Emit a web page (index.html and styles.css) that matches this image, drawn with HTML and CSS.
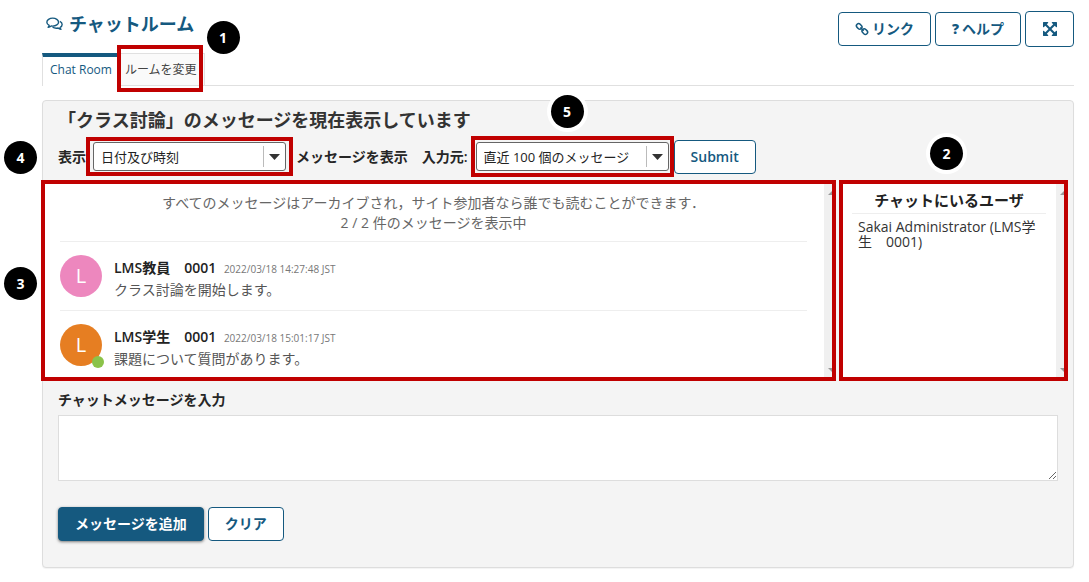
FILE: index.html
```html
<!DOCTYPE html>
<html lang="ja">
<head>
    <meta charset="UTF-8">
    <meta name="viewport" content="width=device-width, initial-scale=1.0">
    <title>チャットルーム</title>
    <link rel="stylesheet" href="styles.css">
</head>
<body>
    <header class="tool-header">
        <h1>
            <svg class="icon-chat" viewBox="0 0 16 14" aria-hidden="true">
                <path d="M6.300 1C3.300 1 .8 2.700 .8 4.800c0 1.300.9 2.300 2.200 3-.1.700-.5 1.300-1 1.800 1.200-.2 2.100-.6 2.900-1.200.5.1.9.1 1.400.1 3 0 5.500-1.700 5.500-3.700S9.300 1 6.300 1z"/>
                <path d="M13 4.100c1.400.6 2.200 1.600 2.200 2.800 0 1.200-.8 2.200-2 2.900.1.700.4 1.200.9 1.700-1.100-.2-2-.6-2.700-1.200-1.900.4-3.800.1-5.200-.8"/>
            </svg>
            チャットルーム
        </h1>
        <div class="tool-actions">
            <button type="button" class="btn">
                <svg class="icon-link" viewBox="0 0 14 14" aria-hidden="true">
                    <rect x="1.200" y="2.200" width="6" height="4.400" rx="2.200" transform="rotate(45 4.200 4.400)"/>
                    <rect x="6.800" y="7.400" width="6" height="4.400" rx="2.200" transform="rotate(45 9.800 9.600)"/>
                    <path d="M5.300 5.500l3.400 3.200"/>
                </svg>
                リンク
            </button>
            <button type="button" class="btn"><b>?</b>ヘルプ</button>
            <button type="button" class="btn btn-expand" aria-label="全画面">
                <svg class="icon-expand" viewBox="0 -128 1536 1536" aria-hidden="true">
                    <path d="M1283 995l-355-355 355-355 144 144q29 31 70 14 39-17 39-59v-448q0-26-19-45t-45-19h-448q-42 0-59 40-17 39 14 69l144 144-355 355-355-355 144-144q31-30 14-69-17-40-59-40h-448q-26 0-45 19t-19 45v448q0 42 40 59 39 17 69-14l144-144 355 355-355 355-144-144q-19-19-45-19-12 0-24 5-40 17-40 59v448q0 26 19 45t45 19h448q42 0 59-40 17-39-14-69l-144-144 355-355 355 355-144 144q-31 30-14 69 17 40 59 40h448q26 0 45-19t19-45v-448q0-42-39-59-13-5-25-5-26 0-45 19z"/>
                </svg>
            </button>
        </div>
    </header>

    <nav class="tabs">
        <a href="#" class="tab active">Chat Room</a>
        <a href="#" class="tab tab-change">ルームを変更<span class="badge badge-1">1</span></a>
    </nav>

    <main class="panel">
        <h2>「クラス討論」のメッセージを現在表示しています</h2>

        <form class="filters">
            <label for="view">表示</label>
            <div class="callout callout-view">
                <div class="select">
                    <select id="view">
                        <option>日付及び時刻</option>
                    </select>
                    <svg viewBox="0 0 24 21" aria-hidden="true"><path class="line" d="M1.500 0v21"/><path d="M7 8h11l-5.500 6z"/></svg>
                </div>
                <span class="badge badge-4">4</span>
            </div>
            <label for="source" class="source-label">メッセージを表示　入力元:</label>
            <div class="callout callout-source">
                <div class="select">
                    <select id="source">
                        <option>直近 100 個のメッセージ</option>
                    </select>
                    <svg viewBox="0 0 24 21" aria-hidden="true"><path class="line" d="M1.500 0v21"/><path d="M7 8h11l-5.500 6z"/></svg>
                </div>
                <span class="badge badge-5">5</span>
            </div>
            <button type="button" class="btn btn-submit">Submit</button>
        </form>

        <div class="chat">
            <section class="callout messages">
                <div class="message-list">
                    <p class="intro">すべてのメッセージはアーカイブされ，サイト参加者なら誰でも読むことができます．<br>2 / 2 件のメッセージを表示中</p>
                    <article class="message">
                        <span class="avatar pink">L</span>
                        <div>
                            <h3>LMS教員　0001 <time>2022/03/18 14:27:48 JST</time></h3>
                            <p>クラス討論を開始します。</p>
                        </div>
                    </article>
                    <article class="message">
                        <span class="avatar orange online">L</span>
                        <div>
                            <h3>LMS学生　0001 <time>2022/03/18 15:01:17 JST</time></h3>
                            <p>課題について質問があります。</p>
                        </div>
                    </article>
                </div>
                <div class="scrollbar">
                    <svg viewBox="0 0 8 6" aria-hidden="true"><path d="M4 5l4-4v4z"/></svg>
                    <svg viewBox="0 0 8 6" aria-hidden="true"><path d="M4 1h4v4z"/></svg>
                </div>
                <span class="badge badge-3">3</span>
            </section>

            <section class="callout users">
                <div class="user-list">
                    <h3>チャットにいるユーザ</h3>
                    <p>Sakai Administrator (LMS学生　0001)</p>
                </div>
                <div class="scrollbar">
                    <svg viewBox="0 0 8 6" aria-hidden="true"><path d="M4 5l4-4v4z"/></svg>
                    <svg viewBox="0 0 8 6" aria-hidden="true"><path d="M4 1h4v4z"/></svg>
                </div>
                <span class="badge badge-2">2</span>
            </section>
        </div>

        <form class="compose">
            <label for="message">チャットメッセージを入力</label>
            <textarea id="message"></textarea>
            <div class="compose-actions">
                <button type="button" class="btn btn-primary">メッセージを追加</button>
                <button type="reset" class="btn">クリア</button>
            </div>
        </form>
    </main>
</body>
</html>
```
FILE: styles.css
```css
* {
    box-sizing: border-box;
}

body {
    margin: 0;
    padding: 11px 15px 14px 42px;
    background: #fff;
    color: #262626;
    font-family: "Open Sans", "Noto Sans CJK JP", sans-serif;
    font-size: 14px;
    line-height: 20px;
}

h1, h2, h3, p {
    margin: 0;
}

.tool-header {
    display: flex;
    justify-content: space-between;
    align-items: flex-start;
    height: 42px;
}

.tool-header h1 {
    display: flex;
    align-items: center;
    gap: 6px;
    padding-left: 4px;
    color: #15597f;
    font-size: 18px;
    line-height: 26px;
}

.icon-chat {
    width: 17px;
    height: 15px;
    fill: none;
    stroke: #15597f;
    stroke-width: 1.3;
    stroke-linejoin: round;
}

.tool-actions {
    display: flex;
    align-items: center;
    gap: 4px;
}

.btn {
    display: inline-flex;
    align-items: center;
    justify-content: center;
    gap: 3px;
    height: 34px;
    padding: 0 16px;
    border: 1px solid #15597f;
    border-radius: 4px;
    background: #fff;
    color: #15597f;
    font-family: inherit;
    font-size: 14px;
    font-weight: 600;
    line-height: 20px;
    white-space: nowrap;
    cursor: pointer;
}

.btn-expand {
    width: 49px;
    height: 36px;
}

.icon-link {
    width: 14px;
    height: 14px;
    fill: none;
    stroke: #15597f;
    stroke-width: 1.5;
}

.icon-expand {
    width: 14px;
    height: 14px;
    fill: #15597f;
    flex: none;
}

/* Tabs */
.tabs {
    display: flex;
    height: 33px;
    border-bottom: 1px solid #e0e0e0;
    font-size: 12px;
}

.tab {
    position: relative;
    height: 33px;
    padding: 6px 7px;
    border: 1px solid #e0e0e0;
    border-left: 0;
    background: #fafafa;
    color: #444;
    text-decoration: none;
    white-space: nowrap;
}

.tab.active {
    padding: 3px 6px 6px 7px;
    border: 0;
    border-top: 4px solid #15597f;
    border-left: 1px solid #e0e0e0;
    background: #fff;
    color: #15597f;
}

.tab-change::after {
    content: "";
    position: absolute;
    inset: -9px 1px -7px -1px;
    border: 4px solid #c00000;
}

/* Panel */
.panel {
    margin-top: 14px;
    padding-top: 7px;
    border: 1px solid #ddd;
    border-radius: 4px;
    background: #f4f4f4;
    box-shadow: 0 1px 1px rgba(0, 0, 0, 0.05);
}

.panel h2 {
    padding: 0 15px;
    color: #333;
    font-size: 18px;
    line-height: 24px;
}

.filters {
    display: flex;
    align-items: center;
    height: 41px;
    margin-top: 4px;
    padding-left: 15px;
    font-weight: 600;
    white-space: nowrap;
}

.callout {
    position: relative;
    border: 4px solid #c00000;
}

.callout-view {
    padding: 1px 3px;
}

.callout-source {
    padding: 2px 1px;
}

.source-label {
    padding: 0 3px;
}

.select {
    position: relative;
    width: 193px;
}

.select select {
    display: block;
    width: 100%;
    height: 29px;
    padding: 0 28px 0 7px;
    border: 1px solid #666;
    border-radius: 3px;
    background: #fff;
    color: #222;
    font-family: inherit;
    font-size: 13px;
    appearance: none;
}

.select svg {
    position: absolute;
    top: 4px;
    right: 0;
    width: 24px;
    height: 21px;
    fill: #333;
    pointer-events: none;
}

.select .line {
    stroke: #bbb;
}

/* Messages and users */
.chat {
    display: grid;
    grid-template-columns: minmax(0, 1fr) 229px;
    gap: 3px;
    margin: 3px 5px 0 -2px;
}

.messages, .users {
    display: flex;
    background: #fff;
}

.message-list {
    flex: 1;
    padding: 9px 17px 0 15px;
}

.intro {
    padding-bottom: 8px;
    color: #666;
    text-align: center;
}

.message {
    display: flex;
    gap: 12px;
    padding: 13px 0 10px;
    border-top: 1px solid #eee;
}

.message:last-child {
    padding-bottom: 8px;
}

.message h3 {
    height: 25px;
    color: #222;
    font-size: 14px;
    font-weight: 600;
    line-height: 26px;
}

.message time {
    margin-left: 4px;
    color: #777;
    font-size: 10px;
    font-weight: 400;
}

.message p {
    color: #555;
}

.avatar {
    position: relative;
    flex: none;
    width: 42px;
    height: 42px;
    border-radius: 50%;
    color: #fff;
    font-size: 20px;
    line-height: 42px;
    text-align: center;
}

.pink {
    background: #ed87be;
}

.orange {
    background: #e67e22;
}

.online::after {
    content: "";
    position: absolute;
    right: -2px;
    bottom: -2px;
    width: 12px;
    height: 12px;
    border-radius: 50%;
    background: #8bc34a;
}

.scrollbar {
    display: flex;
    flex-direction: column;
    justify-content: space-between;
    width: 8px;
    padding: 6px 0 4px;
    background: #f0f0f0;
}

.scrollbar svg {
    width: 8px;
    height: 6px;
    fill: #999;
}

.user-list {
    flex: 1;
    padding: 4px 10px 0 9px;
}

.user-list h3 {
    padding-bottom: 1px;
    border-bottom: 1px solid #eee;
    color: #222;
    font-size: 15px;
    line-height: 24px;
    text-align: center;
}

.user-list p {
    padding: 5px 6px 0;
    color: #333;
    line-height: 15px;
}

/* New message */
.compose {
    padding: 9px 15px 26px;
}

.compose label {
    display: block;
    font-weight: 600;
}

.compose textarea {
    display: block;
    width: 100%;
    height: 66px;
    margin-top: 5px;
    border: 1px solid #ddd;
    background: #fff;
    font: inherit;
    resize: both;
}

.compose-actions {
    display: flex;
    gap: 4px;
    margin-top: 26px;
}

.btn-primary {
    background: #15597f;
    color: #fff;
    box-shadow: 0 1px 3px rgba(0, 0, 0, 0.5);
}

/* Numbered markers */
.badge {
    position: absolute;
    z-index: 1;
    width: 33px;
    height: 33px;
    border-radius: 50%;
    background: #000;
    box-shadow: 0 0 0 4px #fff;
    color: #fff;
    font-size: 14px;
    font-weight: 700;
    line-height: 33px;
    text-align: center;
}

.badge-1 {
    top: -33px;
    right: -36px;
}

.badge-2 {
    top: -47px;
    left: 87px;
}

.badge-3 {
    top: 83px;
    left: -41px;
    box-shadow: none;
}

.badge-4 {
    top: 0;
    left: -86px;
    box-shadow: none;
}

.badge-5 {
    top: -45px;
    left: 76px;
}
```
